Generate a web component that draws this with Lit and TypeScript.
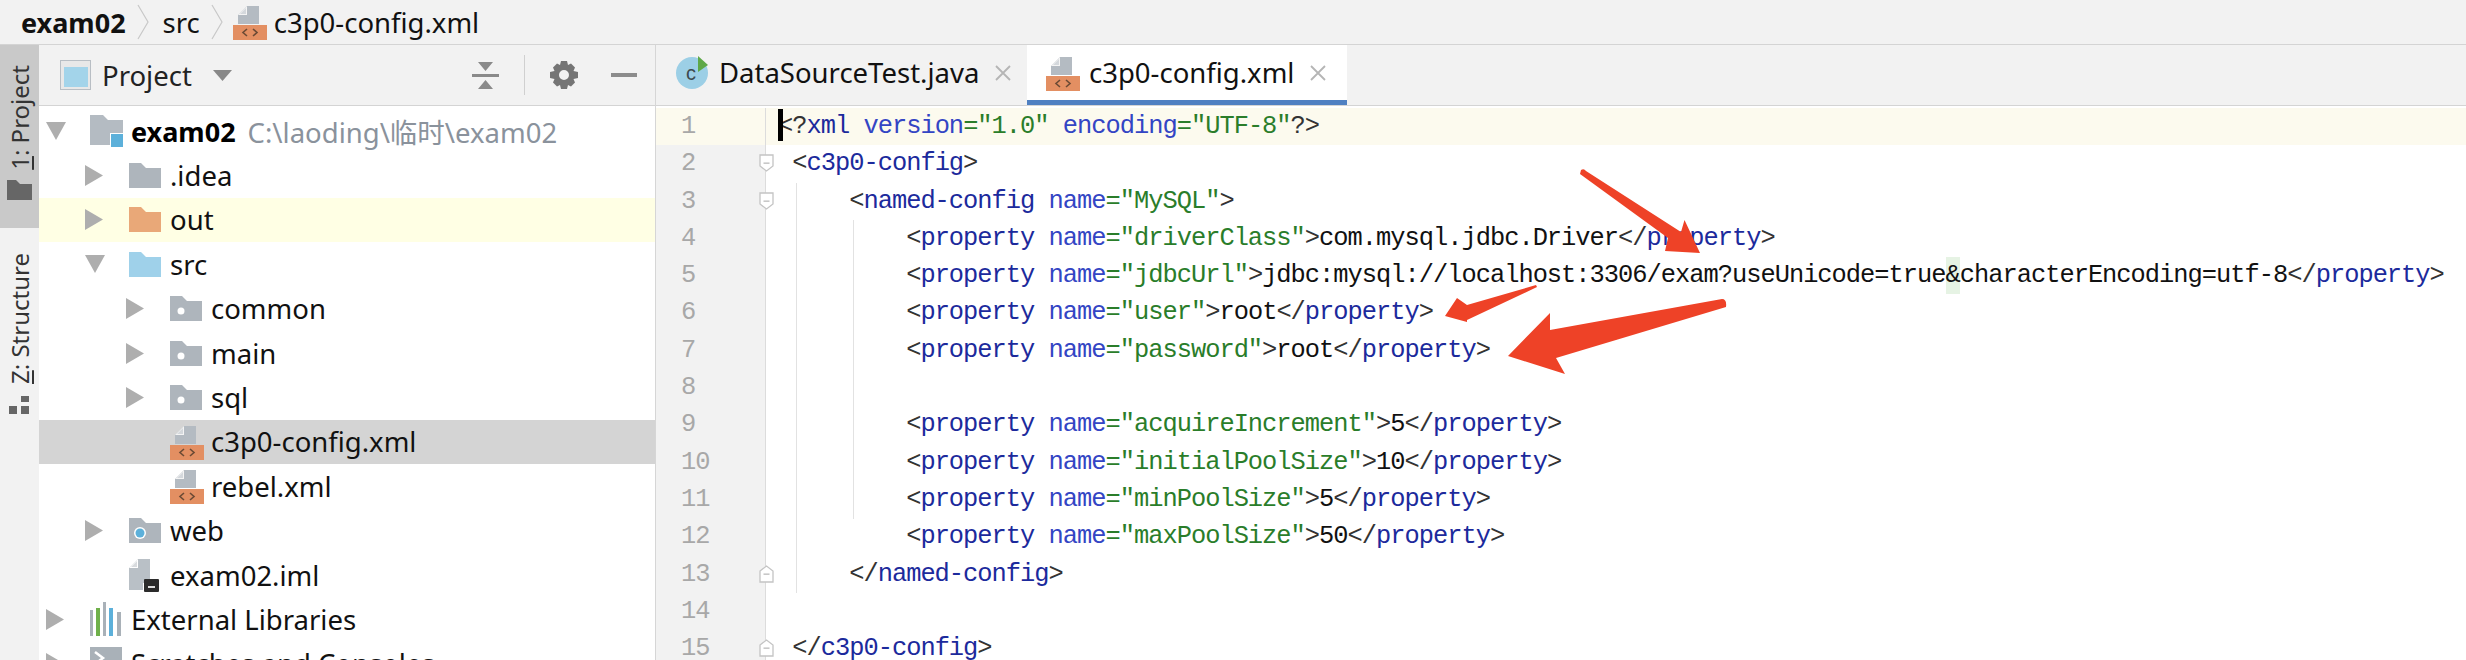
import { LitElement, html, css, svg } from "lit";
import { customElement } from "lit/decorators.js";

const xmlIcon = () => html`<svg class="ic-file" viewBox="0 0 34 36" width="34" height="36">
  <path d="M14 2h12v18H5V11z" fill="#b4bbc2"/><path d="M14 2v9H5z" fill="#f4f4f4"/><path d="M13 4v6H7z" fill="#d4d8dc"/>
  <rect x="0" y="21" width="34" height="15" fill="#e38f62"/>
  <path d="M14 25l-4 3.500 4 3.500M20 25l4 3.500-4 3.500" fill="none" stroke="#6b4a35" stroke-width="1.6"/>
</svg>`;

const folder = (fill: string, dot?: string) => html`<svg class="ic" viewBox="0 0 32 25" width="32" height="25">
  <path d="M0 0h12l5 5h15v20H0z" fill="${fill}"/>
  ${dot === "#fff" ? svg`<circle cx="11" cy="15" r="3.500" fill="#fff"/>` : ""}
  ${dot && dot !== "#fff" ? svg`<circle cx="11" cy="15" r="6" fill="#fff"/><circle cx="11" cy="15" r="4.500" fill="${dot}"/>` : ""}
</svg>`;

const moduleIcon = () => html`<svg class="ic" viewBox="0 0 33 32" width="33" height="32">
  <path d="M0 0h13l5 5h15v18H20v7H0z" fill="#b4bbc2"/><rect x="20" y="18" width="13" height="14" fill="#fff"/><rect x="21" y="19" width="12" height="13" fill="#5cb0da"/>
</svg>`;

const imlIcon = () => html`<svg class="ic" viewBox="0 0 30 33" width="30" height="33">
  <path d="M9 0h12v24H14v7H0V9z" fill="#b9c0c6"/><path d="M9 0v9H0z" fill="#fff"/><path d="M8 2v6H2z" fill="#d8dbde"/>
  <rect x="15" y="20" width="15" height="13" rx="1" fill="#2b2b2b"/><rect x="19" y="27" width="7" height="2" fill="#ddd"/>
</svg>`;

const libsIcon = () => html`<svg class="ic" viewBox="0 0 32 34" width="32" height="34">
  <rect x="0" y="8" width="3" height="26" fill="#a9b1b8"/><rect x="6" y="6" width="4" height="28" fill="#6fb04a"/>
  <rect x="13" y="0" width="3" height="34" fill="#a9b1b8"/><rect x="19" y="6" width="4" height="28" fill="#5cb0da"/><rect x="27" y="10" width="4" height="24" fill="#a9b1b8"/>
</svg>`;

const scratchIcon = () => html`<svg class="ic" viewBox="0 0 32 34" width="32" height="34">
  <rect width="32" height="34" fill="#a9b1b8"/><path d="M5 5l8 6-8 6" fill="none" stroke="#fff" stroke-width="2.500"/>
</svg>`;

type Row = { d: number; label: string; arrow?: "r" | "d"; icon: unknown; cls?: string; hint?: string; bold?: boolean };

const rows: Row[] = [
  { d: 0, label: "exam02", arrow: "d", icon: moduleIcon(), bold: true, hint: "C:\\laoding\\临时\\exam02" },
  { d: 1, label: ".idea", arrow: "r", icon: folder("#aeb5bc") },
  { d: 1, label: "out", arrow: "r", icon: folder("#e9a878"), cls: "hl" },
  { d: 1, label: "src", arrow: "d", icon: folder("#9fd1ea") },
  { d: 2, label: "common", arrow: "r", icon: folder("#aeb5bc", "#fff") },
  { d: 2, label: "main", arrow: "r", icon: folder("#aeb5bc", "#fff") },
  { d: 2, label: "sql", arrow: "r", icon: folder("#aeb5bc", "#fff") },
  { d: 2, label: "c3p0-config.xml", icon: xmlIcon(), cls: "sel" },
  { d: 2, label: "rebel.xml", icon: xmlIcon() },
  { d: 1, label: "web", arrow: "r", icon: folder("#aeb5bc", "#5cb0da") },
  { d: 1, label: "exam02.iml", icon: imlIcon() },
  { d: 0, label: "External Libraries", arrow: "r", icon: libsIcon() },
  { d: 0, label: "Scratches and Consoles", arrow: "r", icon: scratchIcon() },
];

const code: string[] = [
  `<?xml version="1.0" encoding="UTF-8"?>`,
  ` <c3p0-config>`,
  `     <named-config name="MySQL">`,
  `         <property name="driverClass">com.mysql.jdbc.Driver</property>`,
  `         <property name="jdbcUrl">jdbc:mysql://localhost:3306/exam?useUnicode=true&characterEncoding=utf-8</property>`,
  `         <property name="user">root</property>`,
  `         <property name="password">root</property>`,
  ``,
  `         <property name="acquireIncrement">5</property>`,
  `         <property name="initialPoolSize">10</property>`,
  `         <property name="minPoolSize">5</property>`,
  `         <property name="maxPoolSize">50</property>`,
  `     </named-config>`,
  ``,
  ` </c3p0-config>`,
];

const folds: Record<number, "open" | "close"> = { 1: "open", 2: "open", 12: "close", 14: "close" };

function tokens(line: string) {
  const re = /(<\?|<\/|<)([\w-]+)|([\w-]+)(="[^"]*")|(\?>|>)|([^<>])/g;
  const out: unknown[] = [];
  let plain = "";
  const flush = () => {
    if (plain) out.push(plain);
    plain = "";
  };
  for (const m of line.matchAll(re)) {
    if (m[6] !== undefined) {
      if (m[6] === "&") {
        flush();
        out.push(html`<span class="amp">&amp;</span>`);
      } else plain += m[6];
      continue;
    }
    flush();
    if (m[1]) out.push(html`<span class="p">${m[1]}</span><span class="t">${m[2]}</span>`);
    else if (m[3]) out.push(html`<span class="a">${m[3]}</span><span class="v">${m[4]}</span>`);
    else out.push(html`<span class="p">${m[5]}</span>`);
  }
  flush();
  return out;
}

@customElement("app-root")
export class AppRoot extends LitElement {
  static styles = css`
    :host { display: block; width: 2466px; height: 660px; overflow: hidden; position: relative; background: #fff;
      font-family: "Noto Sans", "Noto Sans CJK SC", sans-serif; color: #111; }
    .crumb { height: 44px; background: #f2f2f2; border-bottom: 1px solid #d4d4d4; display: flex; align-items: center;
      padding-left: 21px; font-size: 27.5px; box-sizing: content-box; }
    .crumb b { font-weight: 700; font-size: 27px; }
    .chev { width: 12px; height: 36px; margin: 0 14px 0 11px; flex: none; }
    .crumb svg.ic-file { margin: 0 7px 0 -4px; }
    .main { display: flex; height: 615px; }
    .strip { width: 39px; flex: none; background: #f2f2f2; display: flex; flex-direction: column; color: #333; font-size: 24px; }
    .st1 { height: 183px; background: #c9c9c9; display: flex; flex-direction: column; align-items: center; padding-top: 20px; box-sizing: border-box; gap: 10px; }
    .st2 { display: flex; flex-direction: column; align-items: center; padding-top: 25px; gap: 12px; }
    .vt { writing-mode: vertical-rl; transform: rotate(180deg); line-height: 39px; white-space: nowrap; }
    .vt u { text-decoration: underline; }
    .panel { width: 616px; flex: none; border-right: 1px solid #d6d6d6; box-sizing: content-box; overflow: hidden; }
    .phead { height: 60px; background: #f2f2f2; border-bottom: 1px solid #d4d4d4; display: flex; align-items: center; padding-left: 21px; font-size: 27.5px; }
    .phead .pt { margin-left: 11px; color: #222; }
    .phead .tri { margin-left: 21px; }
    .phead .sp { flex: 1; }
    .phead .div { width: 1px; height: 40px; background: #d0d0d0; margin: 0 25px; }
    .phead .minus { margin: 0 18px 0 33px; width: 26px; height: 4px; background: #8c8c8c; }
    .tree { padding-top: 3px; font-size: 27.5px; }
    .row { height: 44.4px; display: flex; align-items: center; position: relative; white-space: nowrap; }
    .row.hl { background: #ffffe4; }
    .row.sel { background: #d4d4d4; }
    .arr { width: 44px; flex: none; display: flex; justify-content: flex-start; }
    .ic-wrap { width: 41px; flex: none; display: flex; align-items: center; }
    .row svg { display: block; }
    .label { color: #111; }
    .label.b { font-weight: 700; color: #000; font-size: 27px; }
    .hint { color: #8a929c; margin-left: 12px; }
    .editor { flex: 1; min-width: 0; display: flex; flex-direction: column; }
    .tabs { height: 60px; background: #f2f2f2; border-bottom: 1px solid #d4d4d4; display: flex; font-size: 27.5px; }
    .tab { display: flex; align-items: center; height: 55px; }
    .tab.one { width: 371px; padding-left: 20px; box-sizing: border-box; }
    .tab.two { width: 320px; padding-left: 19px; box-sizing: border-box; background: #fff; height: 60px; border-bottom: 5px solid #4f80c2; margin-bottom: -1px; }
    .tab .ttx { margin-left: 9px; }
    .tab.one .ttx { margin-left: 10px; }
    .tab .x { margin-left: 16px; }
    .body { position: relative; flex: 1; padding-top: 2px; overflow: hidden; font-family: "Liberation Mono", monospace; font-size: 25.4px; letter-spacing: -1px; line-height: 1; }
    .ln { display: flex; height: 37.3px; align-items: center; }
    .ln.cur { background: #fcfaee; }
    .gut { width: 110px; flex: none; align-self: stretch; background: #f2f2f2; border-right: 1px solid #dcdcdc; box-sizing: border-box; position: relative; color: #a8a8a8; padding-left: 25px;
      display: flex; align-items: center; }
    .ln.cur .gut { background: #fcfaee; }
    .fold { position: absolute; left: 103px; top: 9px; z-index: 1; }
    .txt { white-space: pre; padding-left: 12px; color: #111; }
    .p { color: #333; }
    .t { color: #1c2a9c; }
    .a { color: #3345c4; }
    .v { color: #2a7d2a; }
    .amp { background: #e6f3e4; display: inline-block; height: 37px; line-height: 37px; }
    .guide { position: absolute; width: 1px; background: #e2e2e2; }
    .g1 { left: 140px; top: 77px; height: 410px; }
    .g2 { left: 197px; top: 114px; height: 299px; }
    .caret { position: absolute; left: 122px; top: 3px; width: 5px; height: 32px; background: #000; }
    .arrows { position: absolute; left: 0; top: 0; pointer-events: none; }
  `;

  render() {
    return html`
      <div class="crumb">
        <b>exam02</b>
        ${this.chev()}<span>src</span>${this.chev()}
        ${xmlIcon()}<span>c3p0-config.xml</span>
      </div>
      <div class="main">
        <div class="strip">
          <div class="st1">
            <span class="vt"><u>1</u>: Project</span>
            <svg viewBox="0 0 25 20" width="25" height="20"><path d="M0 0h9l4 4h12v16H0z" fill="#666"/></svg>
          </div>
          <div class="st2">
            <span class="vt"><u>Z</u>: Structure</span>
            <svg viewBox="0 0 21 18" width="21" height="18"><g fill="#666"><rect x="12" y="0" width="8" height="6"/><rect x="0" y="10" width="8" height="8"/><rect x="12" y="10" width="8" height="8"/></g></svg>
          </div>
        </div>
        <div class="panel">
          <div class="phead">
            <svg viewBox="0 0 31 30" width="31" height="30"><rect width="31" height="30" fill="#b8bec4"/><rect x="1" y="1" width="29" height="28" fill="#e8e8e8"/><rect x="4" y="7" width="24" height="20" fill="#a3d4ea"/></svg>
            <span class="pt">Project</span>
            <svg class="tri" viewBox="0 0 19 11" width="19" height="11"><path d="M0 0h19L9.500 11z" fill="#888"/></svg>
            <span class="sp"></span>
            <svg viewBox="0 0 27 27" width="27" height="27"><path d="M6 0h15l-7.500 9zM6 27h15l-7.500-9z" fill="#8a8a8a"/><rect y="12" width="27" height="3" fill="#8a8a8a"/></svg>
            <span class="div"></span>
            <svg viewBox="0 0 28 28" width="28" height="28"><path fill="#757575" fill-rule="evenodd" d="M11 0h6l1 4 3-1.500 4 4L23.500 10l4.500 1v6l-4.500 1 1.500 3.500-4 4L18 24l-1 4h-6l-1-4-3 1.500-4-4L4.500 18 0 17v-6l4.500-1L3 6.500l4-4L10 4zM14 9a5 5 0 1 0 0 10 5 5 0 0 0 0-10z"/></svg>
            <span class="minus"></span>
          </div>
          <div class="tree">
            ${rows.map(
              (r) => html`<div class="row ${r.cls ?? ""}" style="padding-left:${r.d === 0 ? 7 : 46 + (r.d - 1) * 41}px">
                <span class="arr">${r.arrow === "d"
                  ? html`<svg viewBox="0 0 20 18" width="20" height="18"><path d="M0 0h20L10 18z" fill="#aeaeae"/></svg>`
                  : r.arrow === "r"
                    ? html`<svg viewBox="0 0 18 21" width="18" height="21"><path d="M0 0l18 10.500L0 21z" fill="#aeaeae"/></svg>`
                    : ""}</span>
                <span class="ic-wrap">${r.icon}</span>
                <span class="label ${r.bold ? "b" : ""}">${r.label}</span>
                ${r.hint ? html`<span class="hint">${r.hint}</span>` : ""}
              </div>`,
            )}
          </div>
        </div>
        <div class="editor">
          <div class="tabs">
            <div class="tab one">
              <svg viewBox="0 0 33 33" width="33" height="33"><circle cx="16" cy="17" r="16" fill="#9ccfe6"/><text x="15" y="24" text-anchor="middle" font-size="20" font-family="Liberation Sans" fill="#3d4a50">c</text><path d="M22 0l10 9-10 7z" fill="#5ea848"/></svg>
              <span class="ttx">DataSourceTest.java</span>
              ${this.x()}
            </div>
            <div class="tab two">
              ${xmlIcon()}
              <span class="ttx">c3p0-config.xml</span>
              ${this.x()}
            </div>
          </div>
          <div class="body">
            ${code.map(
              (l, i) => html`<div class="ln ${i === 0 ? "cur" : ""}">
                <div class="gut">${i + 1}${folds[i] ? this.fold(folds[i]) : ""}</div>
                <div class="txt">${tokens(l)}</div>
              </div>`,
            )}
            <div class="guide g1"></div>
            <div class="guide g2"></div>
            <div class="caret"></div>
          </div>
        </div>
      </div>
      <svg class="arrows" width="2466" height="660" viewBox="0 0 2466 660">
        <g fill="#ee4227">
          <path d="M1581 170q3-2 5 1L1681 232l3.500-12L1700 253l-35-2 3-13L1580 174z"/>
          <path d="M1536 285l1 2-70 33 0 2-22-6 12-18 10 7z"/>
          <path d="M1722 299q5 0 4 8L1556 358l9 16-57-18 42-43v17z"/>
        </g>
      </svg>
    `;
  }

  chev() {
    return html`<svg class="chev" viewBox="0 0 12 36"><path d="M1 1l10 17L1 35" fill="none" stroke="#c8c8c8" stroke-width="1.200"/></svg>`;
  }

  x() {
    return html`<svg class="x" viewBox="0 0 16 16" width="16" height="16"><path d="M1 1l14 14M15 1L1 15" stroke="#b5b5b5" stroke-width="1.800"/></svg>`;
  }

  fold(kind: "open" | "close") {
    const p = kind === "open" ? "M1 1h13v11l-6.500 5L1 12z" : "M1 17h13V6L7.500 1 1 6z";
    return html`<svg class="fold" viewBox="0 0 15 18" width="15" height="18"><path d="${p}" fill="#fff" stroke="#c4c4c4" stroke-width="1.300"/><rect x="4.500" y="8.500" width="6" height="1.300" fill="#bbb"/></svg>`;
  }
}
